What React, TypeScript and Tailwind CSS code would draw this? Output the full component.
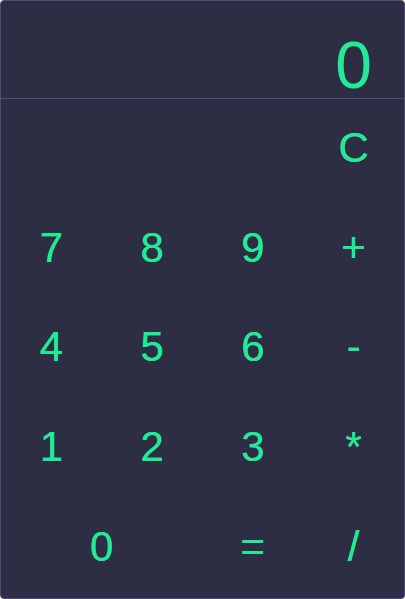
import React, { useState } from "react";

const keys: { label: string; span?: boolean }[] = [
  { label: "" },
  { label: "" },
  { label: "" },
  { label: "C" },
  { label: "7" },
  { label: "8" },
  { label: "9" },
  { label: "+" },
  { label: "4" },
  { label: "5" },
  { label: "6" },
  { label: "-" },
  { label: "1" },
  { label: "2" },
  { label: "3" },
  { label: "*" },
  { label: "0", span: true },
  { label: "=" },
  { label: "/" },
];

export default function App() {
  const [value, setValue] = useState("0");

  const press = (k: string) => {
    if (!k) return;
    if (k === "C") return setValue("0");
    if (k === "=") {
      try {
        // eslint-disable-next-line no-new-func
        const r = Function(`return (${value})`)();
        setValue(String(r));
      } catch {
        setValue("0");
      }
      return;
    }
    setValue((v) => (v === "0" && /\d/.test(k) ? k : v + k));
  };

  return (
    <div
      className="w-[405px] h-[599px] bg-[#2d2d44] border border-[#4e4c72] rounded-[4px] flex flex-col overflow-hidden text-[#22eb98]"
      style={{ fontFamily: '"Liberation Sans", Arial, sans-serif' }}
    >
      <div className="h-[98px] shrink-0 border-b border-[#5a4878] flex items-end justify-end pr-[32px] text-[66px] leading-none">
        {value}
      </div>
      <div className="flex-1 grid grid-cols-4 grid-rows-5">
        {keys.map((k, i) => (
          <button
            key={i}
            onClick={() => press(k.label)}
            className={`flex items-center justify-center text-[42px] leading-none pb-[2px] [text-shadow:0_0_0.4px_#22eb98] ${
              k.span ? "col-span-2" : ""
            }`}
          >
            {k.label}
          </button>
        ))}
      </div>
    </div>
  );
}
